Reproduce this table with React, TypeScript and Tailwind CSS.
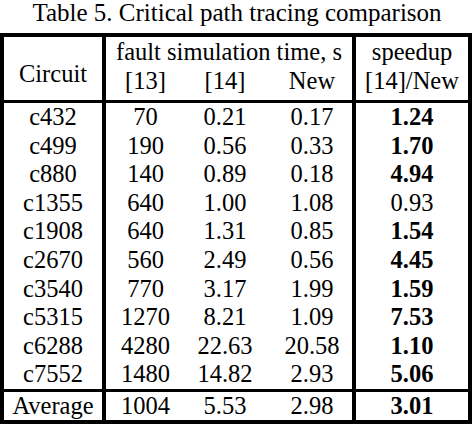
const rows = [
  { c: "c432", a: "70", b: "0.21", n: "0.17", s: "1.24", bold: true },
  { c: "c499", a: "190", b: "0.56", n: "0.33", s: "1.70", bold: true },
  { c: "c880", a: "140", b: "0.89", n: "0.18", s: "4.94", bold: true },
  { c: "c1355", a: "640", b: "1.00", n: "1.08", s: "0.93", bold: false },
  { c: "c1908", a: "640", b: "1.31", n: "0.85", s: "1.54", bold: true },
  { c: "c2670", a: "560", b: "2.49", n: "0.56", s: "4.45", bold: true },
  { c: "c3540", a: "770", b: "3.17", n: "1.99", s: "1.59", bold: true },
  { c: "c5315", a: "1270", b: "8.21", n: "1.09", s: "7.53", bold: true },
  { c: "c6288", a: "4280", b: "22.63", n: "20.58", s: "1.10", bold: true },
  { c: "c7552", a: "1480", b: "14.82", n: "2.93", s: "5.06", bold: true },
];

function Row({ c, a, b, n, s, bold, h }: { c: string; a: string; b: string; n: string; s: string; bold: boolean; h: string }) {
  return (
    <div className={`flex ${h}`}>
      <div className="w-[98px] border-r-4 border-black text-center box-content">{c}</div>
      <div className="w-[79px] text-center">{a}</div>
      <div className="w-[80px] text-center">{b}</div>
      <div className="w-[87px] pl-[7px] text-center box-border">{n}</div>
      <div className={`w-[112px] border-l-4 border-black text-center box-content ${bold ? "font-bold" : ""}`}>{s}</div>
    </div>
  );
}

export default function App() {
  return (
    <div className="w-[474px] h-[424px] bg-white text-black overflow-hidden font-['Liberation_Serif','Times_New_Roman',serif]">
      <div className="h-[33px] text-center text-[25px] leading-[26px]">Table 5. Critical path tracing comparison</div>
      <div className="w-[472px] border-4 border-black text-[24.5px]">
        {/* header */}
        <div className="flex h-[63px] border-b-[3px] border-black box-content">
          <div className="w-[98px] border-r-4 border-black box-content flex items-end justify-center pb-[14px] leading-none">Circuit</div>
          <div className="w-[246px] flex flex-col">
            <div className="h-[29px] leading-[29px] text-center">fault simulation time, s</div>
            <div className="flex h-[29px] leading-[29px]">
              <div className="w-[79px] text-center">[13]</div>
              <div className="w-[80px] text-center">[14]</div>
              <div className="w-[87px] pl-[7px] text-center box-border">New</div>
            </div>
          </div>
          <div className="w-[112px] border-l-4 border-black box-content flex flex-col text-center">
            <div className="h-[29px] leading-[29px]">speedup</div>
            <div className="h-[29px] leading-[29px]">[14]/New</div>
          </div>
        </div>
        <div className="border-b-[3px] border-black leading-[28.6px]">
          {rows.map((r) => (
            <Row key={r.c} {...r} h="h-[28.6px]" />
          ))}
        </div>
        <div className="leading-[28px]">
          <Row c="Average" a="1004" b="5.53" n="2.98" s="3.01" bold h="h-[28px]" />
        </div>
      </div>
    </div>
  );
}
